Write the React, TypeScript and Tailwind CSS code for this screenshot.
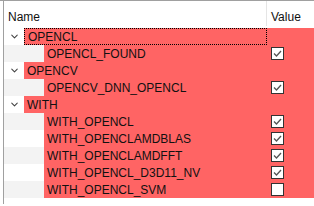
import { ChevronDown } from 'lucide-react';

type Row = { name: string; level: 0 | 1; checked?: boolean; focus?: boolean };

const rows: Row[] = [
  { name: 'OPENCL', level: 0, focus: true },
  { name: 'OPENCL_FOUND', level: 1, checked: true },
  { name: 'OPENCV', level: 0 },
  { name: 'OPENCV_DNN_OPENCL', level: 1, checked: true },
  { name: 'WITH', level: 0 },
  { name: 'WITH_OPENCL', level: 1, checked: true },
  { name: 'WITH_OPENCLAMDBLAS', level: 1, checked: true },
  { name: 'WITH_OPENCLAMDFFT', level: 1, checked: true },
  { name: 'WITH_OPENCL_D3D11_NV', level: 1, checked: true },
  { name: 'WITH_OPENCL_SVM', level: 1, checked: false },
];

function Checkbox({ checked }: { checked: boolean }) {
  return (
    <div className="w-[13px] h-[13px] border border-[#333333] bg-white flex items-center justify-center">
      {checked && (
        <svg width="11" height="11" viewBox="0 0 11 11">
          <path d="M2 5.5 L4.5 8 L9 3" fill="none" stroke="#555555" strokeWidth="1.3" />
        </svg>
      )}
    </div>
  );
}

export default function App() {
  return (
    <div
      className="w-[314px] h-[206px] bg-white overflow-hidden border-t border-[#a0a0a0] text-[12px] text-[#111111]"
      style={{ fontFamily: '"Liberation Sans", Arial, sans-serif' }}
    >
      <div className="ml-[3px] h-[203px] border-l border-[#a0a0a0]">
        {/* Header */}
        <div className="flex h-[27px]">
          <div className="w-[263px] h-[25px] border-r border-[#e5e5e5] pl-[4px] flex items-center pt-[6px]">
            Name
          </div>
          <div className="flex-1 h-[25px] pl-[4px] flex items-center pt-[6px]">Value</div>
        </div>

        {/* Rows */}
        {rows.map((r, i) => (
          <div key={r.name} className={`flex h-[17px] ${i % 2 === 1 ? 'bg-[#f3f3f3]' : 'bg-white'}`}>
            <div className={`${r.level === 0 ? 'w-[20px]' : 'w-[40px]'} flex items-center pl-[5px] shrink-0`}>
              {r.level === 0 && <ChevronDown size={11} strokeWidth={2.2} className="text-[#404040]" />}
            </div>
            <div className="flex-1 flex bg-[#ff6464]">
              <div
                className={`flex-1 flex items-center pl-[3px] pt-[1px] ${
                  r.focus ? 'border border-dotted border-black pl-[2px]' : ''
                }`}
              >
                {r.name}
              </div>
              <div className="w-[47px] flex items-center pl-[4px] shrink-0">
                {r.checked !== undefined && <Checkbox checked={r.checked} />}
              </div>
            </div>
          </div>
        ))}
      </div>
    </div>
  );
}
